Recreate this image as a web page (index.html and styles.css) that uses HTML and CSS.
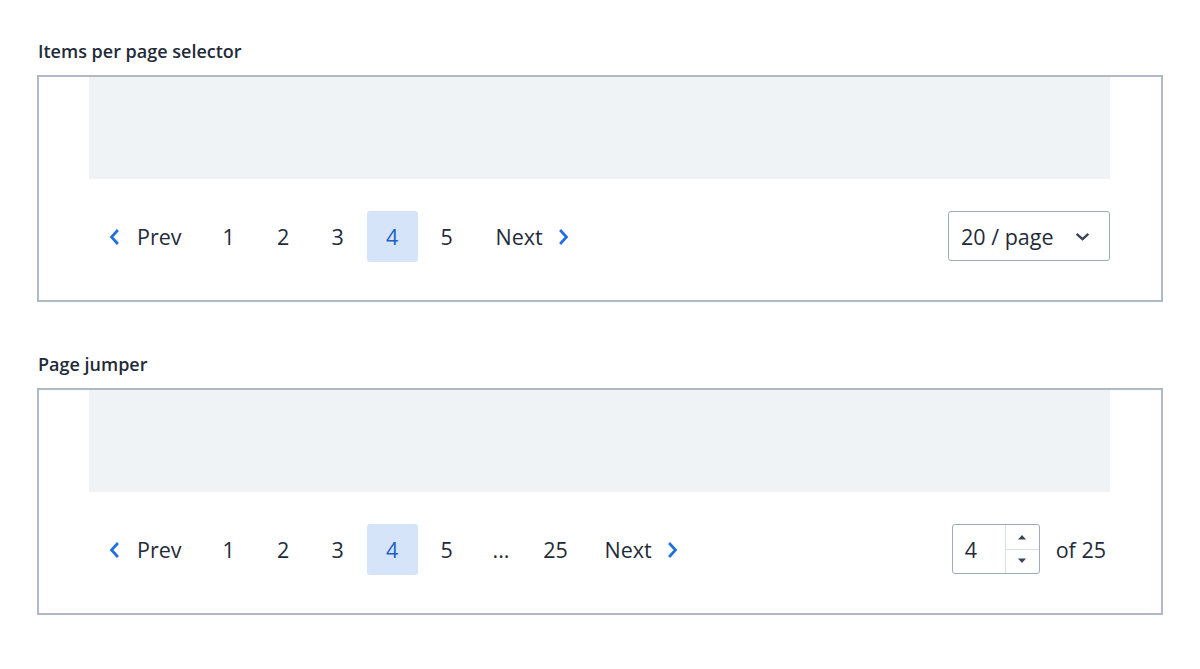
FILE: index.html
```html
<!DOCTYPE html>
<html>
<head>
<meta charset="utf-8">
<link rel="stylesheet" href="styles.css">
</head>
<body>
<section class="demo">
  <h3 class="demo-title">Items per page selector</h3>
  <div class="frame">
    <div class="placeholder"></div>
    <div class="bar">
      <nav class="pager">
        <button class="pg-btn pg-prev"><svg class="chev" viewBox="0 0 10 16"><polyline points="7.5,2 2,8 7.5,14"/></svg><span>Prev</span></button>
        <button class="pg-num">1</button>
        <button class="pg-num">2</button>
        <button class="pg-num">3</button>
        <button class="pg-num active">4</button>
        <button class="pg-num">5</button>
        <button class="pg-btn pg-next"><span>Next</span><svg class="chev" viewBox="0 0 10 16"><polyline points="2.5,2 8,8 2.5,14"/></svg></button>
      </nav>
      <div class="select">
        <span>20 / page</span>
        <svg class="select-chev" viewBox="0 0 14 8"><polyline points="1.5,1.5 7,6.5 12.5,1.5"/></svg>
      </div>
    </div>
  </div>
</section>

<section class="demo">
  <h3 class="demo-title">Page jumper</h3>
  <div class="frame">
    <div class="placeholder"></div>
    <div class="bar">
      <nav class="pager">
        <button class="pg-btn pg-prev"><svg class="chev" viewBox="0 0 10 16"><polyline points="7.5,2 2,8 7.5,14"/></svg><span>Prev</span></button>
        <button class="pg-num">1</button>
        <button class="pg-num">2</button>
        <button class="pg-num">3</button>
        <button class="pg-num active">4</button>
        <button class="pg-num">5</button>
        <span class="pg-num ellipsis">...</span>
        <button class="pg-num">25</button>
        <button class="pg-btn pg-next"><span>Next</span><svg class="chev" viewBox="0 0 10 16"><polyline points="2.5,2 8,8 2.5,14"/></svg></button>
      </nav>
      <div class="jumper">
        <div class="num-input">
          <span class="num-value">4</span>
          <div class="spin">
            <span class="spin-up"><svg viewBox="0 0 10 6"><polygon points="1,5.5 5,1 9,5.5"/></svg></span>
            <span class="spin-down"><svg viewBox="0 0 10 6"><polygon points="1,0.5 5,5 9,0.5"/></svg></span>
          </div>
        </div>
        <span class="of-total">of 25</span>
      </div>
    </div>
  </div>
</section>
</body>
</html>
```

FILE: styles.css
```css
* { box-sizing: border-box; }

body {
  margin: 0;
  padding: 41px 37px 0 37px;
  background: #ffffff;
  font-family: "Open Sans", "Noto Sans", sans-serif;
  color: #1f2b39;
}

.demo { margin-bottom: 52px; }

.demo-title {
  margin: 0 0 14px 1px;
  font-size: 18px;
  line-height: 20px;
  font-weight: 600;
  color: #1f2b39;
}

.frame {
  width: 1126px;
  border: 2px solid #afbac6;
  padding: 0 51px 38px 50px;
}

.placeholder {
  height: 102px;
  background: #f0f3f6;
}

.bar {
  margin-top: 32px;
  display: flex;
  align-items: center;
  justify-content: space-between;
  height: 51px;
}

.pager {
  display: flex;
  align-items: center;
  gap: 3.5px;
}

button {
  font: inherit;
  border: none;
  background: none;
  padding: 0;
  margin: 0;
  color: inherit;
  cursor: pointer;
}

.pg-num {
  width: 51px;
  height: 51px;
  display: flex;
  align-items: center;
  justify-content: center;
  font-size: 21.5px;
  color: #1f2b39;
  border-radius: 3px;
}

.pg-num.active {
  background: #d5e4f9;
  color: #1b5fc4;
}

.ellipsis { color: #1f2b39; }

.pg-btn {
  height: 51px;
  display: flex;
  align-items: center;
  font-size: 21.5px;
  color: #1f2b39;
}

.pg-prev { padding: 0 18px 0 20px; gap: 17px; }
.pg-next { padding: 0 20px 0 20px; gap: 15px; }

.chev {
  width: 11px;
  height: 16px;
  fill: none;
  stroke: #1f6fe3;
  stroke-width: 2.7;
  stroke-linecap: square;
}

.select {
  width: 162px;
  height: 50px;
  border: 1px solid #9eabb8;
  border-radius: 3px;
  display: flex;
  align-items: center;
  justify-content: space-between;
  padding: 0 19px 0 12px;
  font-size: 21.5px;
  margin-top: -1px;
}

.select-chev {
  width: 15px;
  height: 9px;
  fill: none;
  stroke: #3a4654;
  stroke-width: 2.2;
}

.jumper {
  display: flex;
  align-items: center;
  gap: 16px;
  padding-right: 4px;
}

.num-input {
  width: 88px;
  height: 50px;
  border: 1px solid #9eabb8;
  border-radius: 3px;
  display: flex;
  margin-top: -1px;
}

.num-value {
  flex: 1;
  display: flex;
  align-items: center;
  padding-left: 12px;
  font-size: 21.5px;
  border-right: 1px solid #d7dee5;
}

.spin {
  width: 33px;
  display: flex;
  flex-direction: column;
}

.spin-up, .spin-down {
  flex: 1;
  display: flex;
  align-items: center;
  justify-content: center;
}

.spin-up { border-bottom: 1px solid #d7dee5; }

.spin svg {
  width: 10px;
  height: 6px;
  fill: #3a4654;
}

.of-total {
  font-size: 21.5px;
  color: #1f2b39;
}
```
